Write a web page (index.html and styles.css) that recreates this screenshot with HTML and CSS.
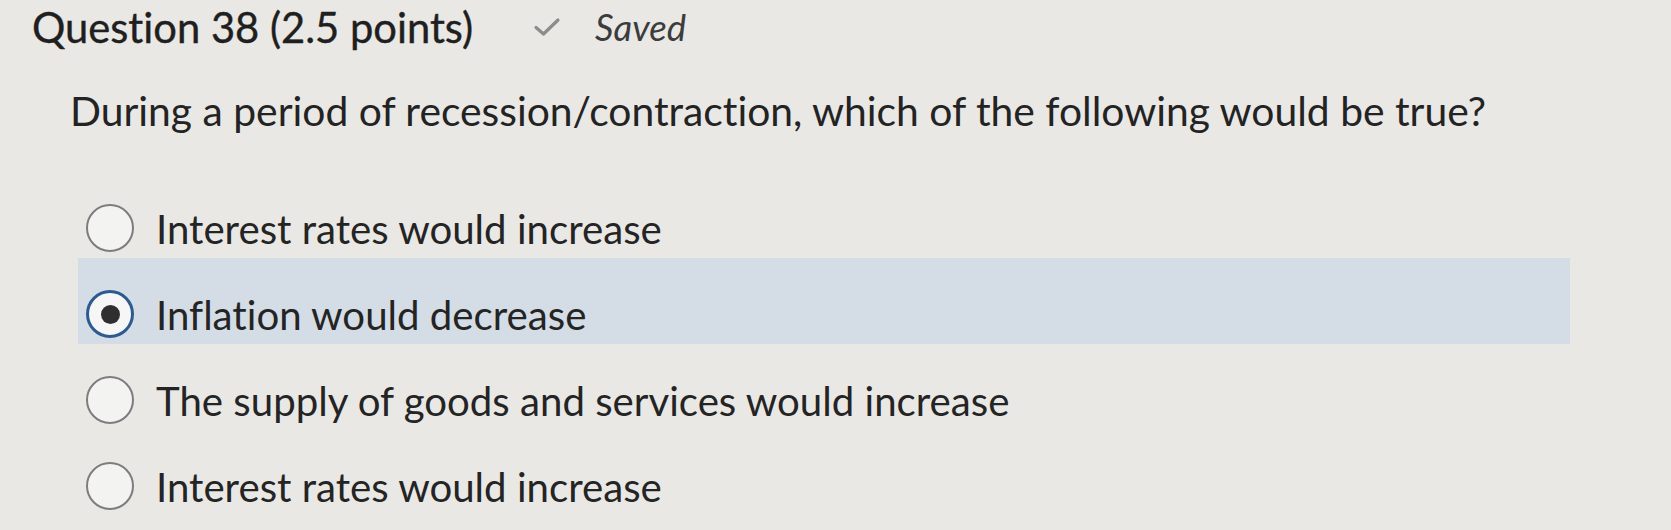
FILE: index.html
```html
<!DOCTYPE html>
<html lang="en">
<head>
<meta charset="utf-8">
<title>Question 38</title>
<link rel="stylesheet" href="styles.css">
</head>
<body>
<div class="page">
  <div class="header">
    <h1 class="title">Question 38 (2.5 points)</h1>
    <div class="saved">
      <svg class="check" viewBox="0 0 28 20" width="28" height="20" aria-hidden="true">
        <path d="M3 10.5 L10.5 17 L25 3" fill="none" stroke="#8c8c8c" stroke-width="3.2" stroke-linecap="round" stroke-linejoin="round"/>
      </svg>
      <span class="saved-text">Saved</span>
    </div>
  </div>
  <p class="question">During a period of recession/contraction, which of the following would be true?</p>
  <div class="options">
    <label class="option"><span class="radio"></span><span class="option-text">Interest rates would increase</span></label>
    <label class="option option-selected"><span class="radio radio-checked"></span><span class="option-text">Inflation would decrease</span></label>
    <label class="option"><span class="radio"></span><span class="option-text">The supply of goods and services would increase</span></label>
    <label class="option"><span class="radio"></span><span class="option-text">Interest rates would increase</span></label>
  </div>
</div>
</body>
</html>
```

FILE: styles.css
```css
html, body {
  margin: 0;
  padding: 0;
}
body {
  background: #e9e8e5;
  font-family: Lato, "Open Sans", sans-serif;
  font-variant-ligatures: none;
  color: #262626;
  width: 1671px;
  height: 530px;
  overflow: hidden;
}
.header {
  display: flex;
  align-items: center;
  height: 54px;
  padding-left: 32px;
}
.title {
  margin: 0;
  font-size: 41.7px;
  font-weight: 400;
  line-height: 54px;
  color: #1f1f1f;
  -webkit-text-stroke: 0.4px #1f1f1f;
}
.saved {
  display: flex;
  align-items: center;
  margin-left: 60px;
  gap: 34px;
}
.check {
  display: block;
}
.saved-text {
  font-style: italic;
  font-size: 36.5px;
  color: #3c3c3c;
}
.question {
  margin: 32px 0 0 70px;
  font-size: 40.8px;
  line-height: 50px;
  color: #232323;
}
.options {
  display: flex;
  flex-direction: column;
  margin: 0 0 0 78px;
  width: 1492px;
  padding-top: 36px;
}
.option {
  display: flex;
  align-items: center;
  gap: 22px;
  height: 86px;
  box-sizing: border-box;
  padding: 32px 0 6px 8px;
}
.option-selected {
  background: #d4dce5;
}
.radio {
  flex: none;
  width: 48px;
  height: 48px;
  border-radius: 50%;
  border: 2px solid #7d7d7d;
  background: #f3f3f2;
  box-sizing: border-box;
  display: flex;
  align-items: center;
  justify-content: center;
}
.radio-checked {
  border: 3px solid #2d5b8f;
  background: #f6f6f6;
}
.radio-checked::after {
  content: "";
  width: 19px;
  height: 19px;
  border-radius: 50%;
  background: #2f2f2f;
}
.option-text {
  font-size: 40.2px;
  color: #242424;
}
```
